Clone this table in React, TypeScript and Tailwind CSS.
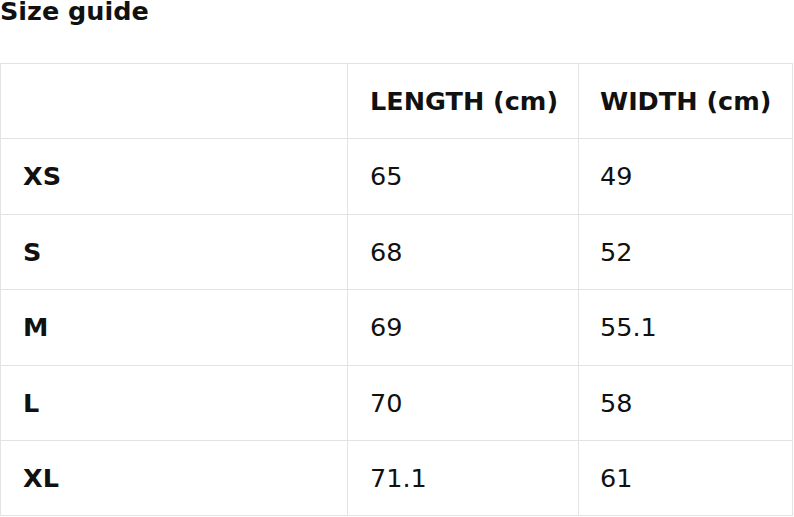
import React from "react";

const rows = [
  ["XS", "65", "49"],
  ["S", "68", "52"],
  ["M", "69", "55.1"],
  ["L", "70", "58"],
  ["XL", "71.1", "61"],
];

export default function App() {
  return (
    <div className="bg-white w-[794px] h-[517px] overflow-hidden text-[#111]" style={{ fontFamily: '"DejaVu Sans", Verdana, sans-serif' }}>
      <h2 className="text-[25.5px] font-bold leading-[30px] -mt-[4px] h-[67px] whitespace-nowrap">Size guide</h2>
      <table className="border-collapse w-[792px] table-fixed">
        <colgroup>
          <col className="w-[347px]" />
          <col className="w-[231px]" />
          <col className="w-[214px]" />
        </colgroup>
        <thead>
          <tr className="h-[75.4px]">
            <th className="border border-[#e3e3e3] px-[22px]"></th>
            <th className="border border-[#e3e3e3] pl-[22px] pr-0 text-left text-[25.5px] font-bold whitespace-nowrap">LENGTH (cm)</th>
            <th className="border border-[#e3e3e3] pl-[21px] pr-0 text-left text-[25.5px] font-bold whitespace-nowrap">WIDTH (cm)</th>
          </tr>
        </thead>
        <tbody>
          {rows.map((r) => (
            <tr key={r[0]} className="h-[75.4px]">
              <td className="border border-[#e3e3e3] px-[22px] text-[25.5px] font-bold">{r[0]}</td>
              <td className="border border-[#e3e3e3] px-[22px] text-[25.5px]">{r[1]}</td>
              <td className="border border-[#e3e3e3] px-[21px] text-[25.5px]">{r[2]}</td>
            </tr>
          ))}
        </tbody>
      </table>
    </div>
  );
}
